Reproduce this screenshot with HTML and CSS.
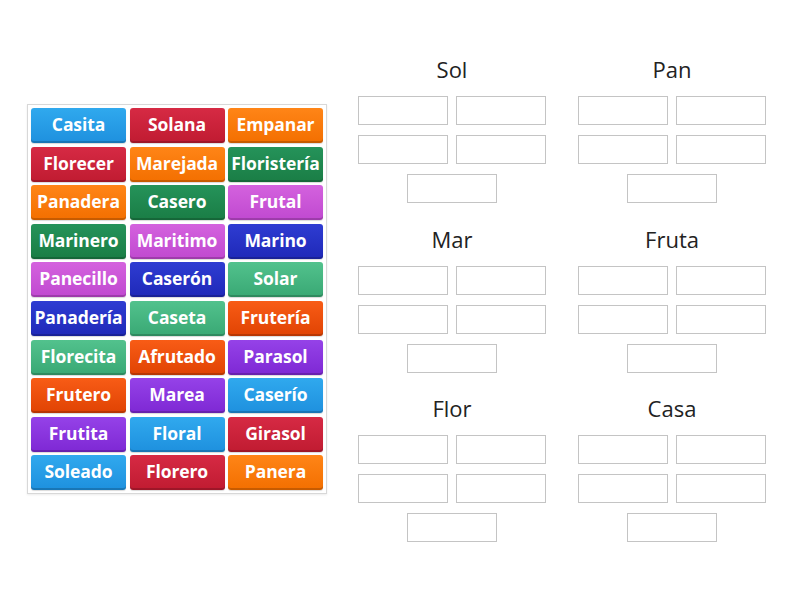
FILE: index.html
```html
<!DOCTYPE html>
<html lang="es">
<head>
<meta charset="utf-8">
<title>Grupos</title>
<link rel="stylesheet" href="styles.css">
</head>
<body>
<div class="page">
  <div class="bank">
    <div class="tile c1">Casita</div>
    <div class="tile c2">Solana</div>
    <div class="tile c3">Empanar</div>
    <div class="tile c2">Florecer</div>
    <div class="tile c3">Marejada</div>
    <div class="tile c4">Floristería</div>
    <div class="tile c3">Panadera</div>
    <div class="tile c4">Casero</div>
    <div class="tile c5">Frutal</div>
    <div class="tile c4">Marinero</div>
    <div class="tile c5">Maritimo</div>
    <div class="tile c6">Marino</div>
    <div class="tile c5">Panecillo</div>
    <div class="tile c6">Caserón</div>
    <div class="tile c7">Solar</div>
    <div class="tile c6">Panadería</div>
    <div class="tile c7">Caseta</div>
    <div class="tile c8">Frutería</div>
    <div class="tile c7">Florecita</div>
    <div class="tile c8">Afrutado</div>
    <div class="tile c9">Parasol</div>
    <div class="tile c8">Frutero</div>
    <div class="tile c9">Marea</div>
    <div class="tile c1">Caserío</div>
    <div class="tile c9">Frutita</div>
    <div class="tile c1">Floral</div>
    <div class="tile c2">Girasol</div>
    <div class="tile c1">Soleado</div>
    <div class="tile c2">Florero</div>
    <div class="tile c3">Panera</div>
  </div>
  <div class="groups">
    <div class="group"><h2 class="title">Sol</h2><div class="slots"><div class="slot"></div><div class="slot"></div><div class="slot"></div><div class="slot"></div><div class="slot"></div></div></div>
    <div class="group"><h2 class="title">Pan</h2><div class="slots"><div class="slot"></div><div class="slot"></div><div class="slot"></div><div class="slot"></div><div class="slot"></div></div></div>
    <div class="group"><h2 class="title">Mar</h2><div class="slots"><div class="slot"></div><div class="slot"></div><div class="slot"></div><div class="slot"></div><div class="slot"></div></div></div>
    <div class="group"><h2 class="title">Fruta</h2><div class="slots"><div class="slot"></div><div class="slot"></div><div class="slot"></div><div class="slot"></div><div class="slot"></div></div></div>
    <div class="group"><h2 class="title">Flor</h2><div class="slots"><div class="slot"></div><div class="slot"></div><div class="slot"></div><div class="slot"></div><div class="slot"></div></div></div>
    <div class="group"><h2 class="title">Casa</h2><div class="slots"><div class="slot"></div><div class="slot"></div><div class="slot"></div><div class="slot"></div><div class="slot"></div></div></div>
  </div>
</div>
</body>
</html>
```
FILE: styles.css
```css
html, body {
  margin: 0;
  padding: 0;
  background: #ffffff;
}
body {
  width: 800px;
  height: 600px;
  overflow: hidden;
  font-family: "Open Sans", "DejaVu Sans", sans-serif;
}
.page {
  display: flex;
  align-items: flex-start;
  padding: 55px 0 0 27px;
}
.bank {
  margin-top: 49px;
  border: 1px solid #d8d8d8;
  padding: 3px;
  display: grid;
  grid-template-columns: repeat(3, 95px);
  grid-auto-rows: 35px;
  column-gap: 3.5px;
  row-gap: 3.6px;
  box-shadow: 0 1px 2px rgba(0,0,0,0.08);
}
.tile {
  border-radius: 3px;
  color: #ffffff;
  font-weight: 700;
  font-size: 17.5px;
  display: flex;
  align-items: center;
  justify-content: center;
  padding-bottom: 3px;
  box-sizing: border-box;
  white-space: nowrap;
  box-shadow: inset 0 -2px 0 rgba(0,0,0,0.18), 0 1px 1px rgba(0,0,0,0.15);
  letter-spacing: -0.1px;
}
.c1 { background: linear-gradient(#30a9ee, #1e90de); }
.c2 { background: linear-gradient(#d62a44, #c01b31); }
.c3 { background: linear-gradient(#ff8517, #f36f00); }
.c4 { background: linear-gradient(#25935a, #1a7d45); }
.c5 { background: linear-gradient(#d462de, #c049d0); }
.c6 { background: linear-gradient(#2e3cd2, #1f29b8); }
.c7 { background: linear-gradient(#52c28d, #39a874); }
.c8 { background: linear-gradient(#f85c16, #e04303); }
.c9 { background: linear-gradient(#9542e8, #7e28d4); }

.groups {
  margin-left: 31px;
  display: grid;
  grid-template-columns: 188px 188px;
  column-gap: 32px;
  row-gap: 21.5px;
}
.group {
  display: flex;
  flex-direction: column;
  align-items: center;
}
.title {
  margin: 0 0 12px 0;
  font-size: 22px;
  font-weight: 400;
  line-height: 29px;
  color: #222222;
}
.slots {
  display: grid;
  grid-template-columns: 90px 90px;
  column-gap: 8px;
  row-gap: 10px;
  justify-content: center;
  justify-items: center;
}
.slot {
  width: 90px;
  height: 29px;
  box-sizing: border-box;
  border: 1px solid #c4c4c4;
  background: #ffffff;
}
.slot:last-child {
  grid-column: 1 / span 2;
}
```
